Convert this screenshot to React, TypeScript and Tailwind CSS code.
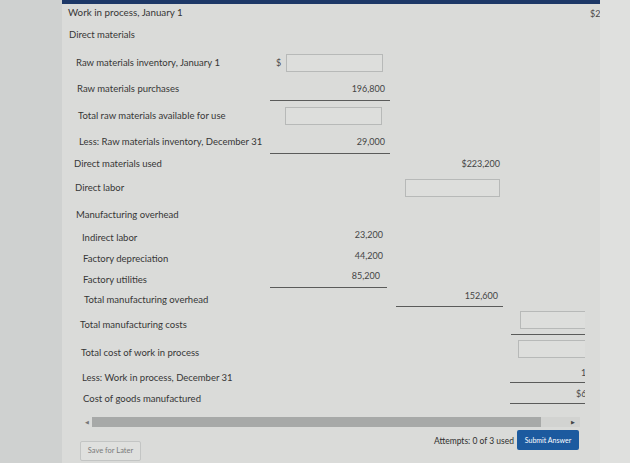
import React from 'react';

// Cost of goods manufactured worksheet (photographed screen look)

const line = 'border-b border-[#5a5b5a]';

function Input({ className = '' }: { className?: string }) {
  return <div className={`h-[18px] border border-[#b7b9b8] bg-[#dddedc] ${className}`} />;
}

function Value({ text, underline = false, className = '' }: { text: string; underline?: boolean; className?: string }) {
  return (
    <div className={`flex-1 flex items-center justify-end pr-[5px] text-[#454545] ${underline ? line : ''} ${className}`}>
      {text}
    </div>
  );
}

function Row({
  h,
  pad,
  label,
  c1,
  c2,
  c3,
}: {
  h: string;
  pad: string;
  label: string;
  c1?: React.ReactNode;
  c2?: React.ReactNode;
  c3?: React.ReactNode;
}) {
  return (
    <div className={`flex ${h}`}>
      <div className={`w-[208px] shrink-0 flex items-center whitespace-nowrap text-[9.5px] text-[#363636] ${pad}`}>
        {label}
      </div>
      <div className="w-[120px] shrink-0 flex">{c1}</div>
      <div className="w-[6px] shrink-0" />
      <div className="w-[109px] shrink-0 flex">{c2}</div>
      <div className="w-[5px] shrink-0" />
      <div className="w-[100px] shrink-0 flex">{c3}</div>
    </div>
  );
}

export default function App() {
  return (
    <div
      className="w-[630px] h-[463px] overflow-hidden flex bg-[#cfd1d0] text-[9px] leading-none"
      style={{ fontFamily: 'Lato, "Open Sans", sans-serif' }}
    >
      {/* left gutter */}
      <div className="w-[62px] shrink-0" />

      {/* main panel */}
      <div className="w-[538px] shrink-0 bg-[#dadbd9] flex flex-col">
        <div className="h-[4px] bg-[#1d3867]" />

        {/* first row, runs to the panel edge */}
        <div className="flex h-[18px] items-center overflow-hidden whitespace-nowrap">
          <div className="w-[528px] shrink-0 pl-[6px] text-[9.8px] text-[#363636]">Work in process, January 1</div>
          <div className="shrink-0 text-[#4a4a4a]">$2</div>
        </div>

        {/* scroll area */}
        <div className="w-[523px] overflow-hidden">
          <Row h="h-[26px]" pad="pl-[7px]" label="Direct materials" />
          <Row
            h="h-[29px]"
            pad="pl-[14px]"
            label="Raw materials inventory, January 1"
            c1={
              <div className="flex-1 flex items-center">
                <span className="w-[16px] pl-[6px] text-[#4a4a4a]">$</span>
                <Input className="w-[97px]" />
              </div>
            }
          />
          <Row h="h-[24px]" pad="pl-[15px]" label="Raw materials purchases" c1={<Value text="196,800" underline />} />
          <Row
            h="h-[29px]"
            pad="pl-[16px]"
            label="Total raw materials available for use"
            c1={
              <div className="flex-1 flex items-center pl-[15px]">
                <Input className="w-[97px]" />
              </div>
            }
          />
          <Row
            h="h-[24px]"
            pad="pl-[17px]"
            label="Less: Raw materials inventory, December 31"
            c1={<Value text="29,000" underline />}
          />
          <Row h="h-[19px]" pad="pl-[12px]" label="Direct materials used" c2={<Value text="$223,200" className="pr-[1px]" />} />
          <Row
            h="h-[30px]"
            pad="pl-[13px]"
            label="Direct labor"
            c2={
              <div className="flex-1 flex items-center pl-[9px]">
                <Input className="w-[95px]" />
              </div>
            }
          />
          <Row h="h-[23px]" pad="pl-[14px]" label="Manufacturing overhead" />
          <Row h="h-[21px]" pad="pl-[20px] pt-[3px]" label="Indirect labor" c1={<Value text="23,200" className="pb-[4px] pr-[7px]" />} />
          <Row h="h-[21px]" pad="pl-[21px] pt-[3px]" label="Factory depreciation" c1={<Value text="44,200" className="pb-[4px] pr-[7px]" />} />
          <Row
            h="h-[20px]"
            pad="pl-[21px] pt-[3px]"
            label="Factory utilities"
            c1={<Value text="85,200" underline className="pb-[4px] pr-[7px] mr-[3px]" />}
          />
          <Row
            h="h-[19px]"
            pad="pl-[22px] pt-[4px]"
            label="Total manufacturing overhead"
            c2={<Value text="152,600" underline className="pb-[3px] pr-[4px] mr-[2px]" />}
          />
          <Row
            h="h-[28px]"
            pad="pl-[18px] pt-[8px]"
            label="Total manufacturing costs"
            c3={
              <div className={`flex-1 flex items-start pl-[9px] pt-[4px] ml-[1px] ${line}`}>
                <Input className="w-[90px]" />
              </div>
            }
          />
          <Row
            h="h-[28px]"
            pad="pl-[19px] pt-[8px]"
            label="Total cost of work in process"
            c3={
              <div className="flex-1 flex items-center pl-[8px]">
                <Input className="w-[90px]" />
              </div>
            }
          />
          <Row
            h="h-[20px]"
            pad="pl-[20px] pt-[10px]"
            label="Less: Work in process, December 31"
            c3={<div className={`flex-1 flex items-center pl-[71px] whitespace-nowrap text-[#4a4a4a] ${line}`}>1</div>}
          />
          <Row
            h="h-[21px]"
            pad="pl-[21px] pt-[10px]"
            label="Cost of goods manufactured"
            c3={
              <div className={`flex-1 flex items-center pl-[66px] whitespace-nowrap text-[#4a4a4a] mr-[4px] ${line}`}>
                $6
              </div>
            }
          />
        </div>

        {/* horizontal scrollbar */}
        <div className="mt-[13px] ml-[20px] w-[498px] h-[10px] flex">
          <div className="w-[10px] flex items-center justify-center text-[5px] text-[#777]">◀</div>
          <div className="w-[449px] bg-[#a7a9a8]" />
          <div className="flex-1 bg-[#d2d3d1] flex items-center justify-end pr-[5px] text-[5px] text-[#444]">▶</div>
        </div>

        {/* footer */}
        <div className="mt-[3px] w-[517px] flex justify-between">
          <button className="mt-[11px] ml-[18px] h-[20px] w-[61px] border border-[#c3c5c4] bg-[#dfe0de] rounded-[2px] text-[7.5px] text-[#7a7a7a]">
            Save for Later
          </button>
          <div className="flex items-center h-[20px] gap-[3px]">
            <span className="text-[8.5px] text-[#2f2f2f] pt-[2px]">Attempts: 0 of 3 used</span>
            <button className="h-[20px] w-[62px] bg-[#1c5a9f] rounded-[2px] text-[7px] text-white">Submit Answer</button>
          </div>
        </div>
      </div>

      {/* right strip */}
      <div className="flex-1 bg-[#dfe0de]" />
    </div>
  );
}
